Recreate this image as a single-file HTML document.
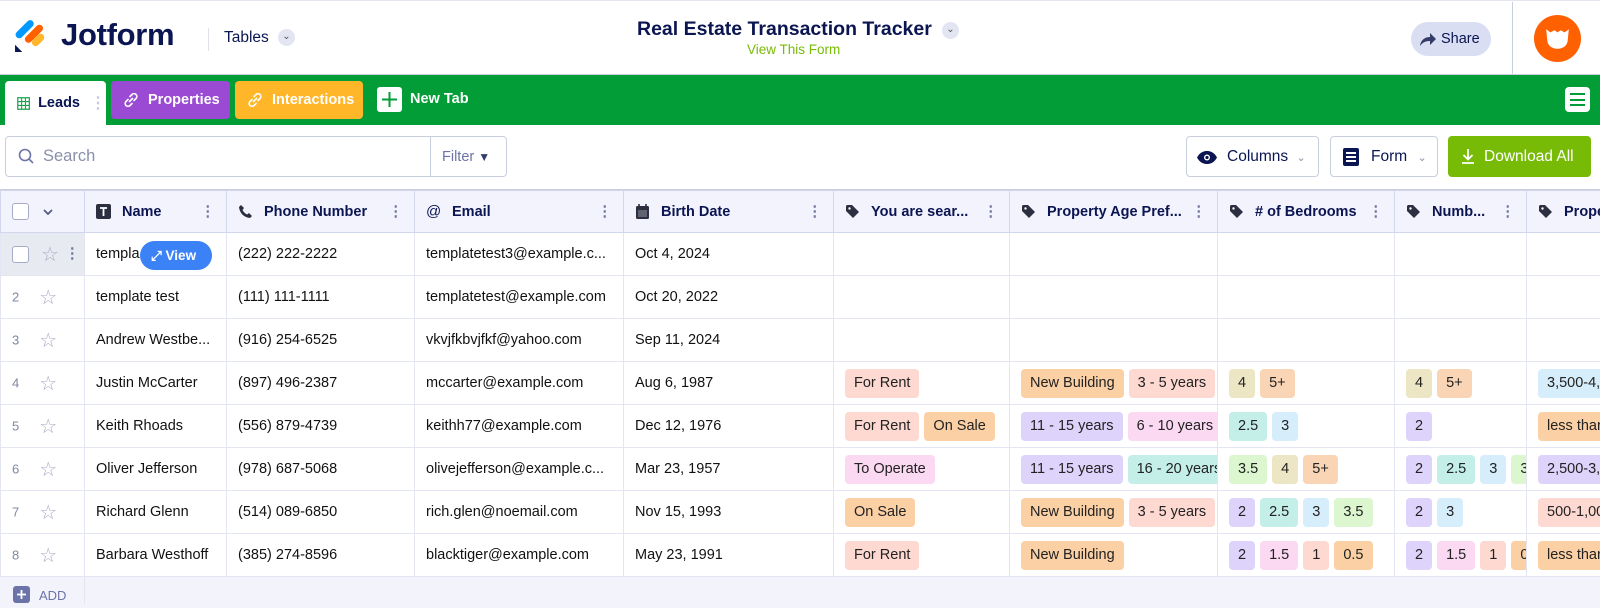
<!DOCTYPE html>
<html><head><meta charset="utf-8"><style>
*{box-sizing:border-box;margin:0;padding:0}
body{width:1600px;height:604px;overflow:hidden;background:#f3f3fb;font-family:"Liberation Sans",sans-serif;color:#0a1551;position:relative}
.hdr{position:absolute;left:0;top:0;width:1600px;height:75px;background:#fff;border-top:1px solid #e3e5ef;border-bottom:1px solid #c8cedc}
.green{position:absolute;left:0;top:75px;width:1600px;height:50px;background:#029d36}
.tool{position:absolute;left:0;top:125px;width:1600px;height:65px;background:#fff;border-bottom:1px solid #c8cedc}
.tab{position:absolute;top:6px;height:38px;border-radius:4px;color:#fff;font-weight:bold;font-size:14.5px;display:flex;align-items:center}
table{position:absolute;left:0;top:190px;border-collapse:collapse;table-layout:fixed;width:1730px;font-size:14.5px}
td,th{border:1px solid #e3e5f3;height:43px;padding:0 11px;white-space:nowrap;overflow:hidden;text-align:left;color:#111;vertical-align:middle}
th{height:42px;background:#f3f3fd;font-weight:bold;color:#0a1551;font-size:14.5px;border-color:#d3d7ee}
tbody tr{background:#fff}
.n{color:#8087a2;font-size:13px}
.tg{display:inline-block;height:29px;line-height:29px;padding:0 9px;border-radius:4px;margin-right:5px;color:#222;vertical-align:middle}
.sal{background:#fdd9d1}.or{background:#fcd0a5}.pu{background:#ded3fb}.pk{background:#fbd9f2}.te{background:#c3efe8}.kh{background:#ede6c4}.bl{background:#d6edfb}.gr{background:#dcf6cf}.o2{background:#f9d5b5}
.dots{float:right;color:#6e76a0;font-weight:bold}
.star{display:inline-block;color:#a8adc5;font-size:20px;margin-left:20px;vertical-align:middle}
.ic{display:inline-block;width:15px;height:15px;margin-right:11px;vertical-align:middle}
.tag{display:inline-block;width:15px;height:15px;margin-right:11px;vertical-align:middle}
</style></head><body>
<div class="hdr">
 <svg style="position:absolute;left:14px;top:19px" width="33" height="33" viewBox="0 0 32 32"><rect x="6" y="-2" width="7" height="22" rx="3.5" fill="#0099ff" transform="rotate(45 10 10)"/><rect x="16" y="2" width="7" height="22" rx="3.5" fill="#ff6100" transform="rotate(45 19 13)"/><rect x="20" y="12" width="7" height="14" rx="3.5" fill="#ffb629" transform="rotate(45 23 19)"/><path d="M1 24 L1 31 L8 31Z" fill="#0a1551"/></svg>
 <div style="position:absolute;left:61px;top:16px;font-size:31px;font-weight:bold;color:#0a1551;letter-spacing:-0.3px">Jotform</div>
 <div style="position:absolute;left:208px;top:27px;width:1px;height:23px;background:#dfe1ea"></div>
 <div style="position:absolute;left:224px;top:28px;font-size:15.5px;color:#0a1551">Tables</div>
 <div style="position:absolute;left:278px;top:28px;width:17px;height:17px;border-radius:50%;background:#e3e5f3;font-size:10px;text-align:center;line-height:15px;color:#555">⌄</div>
 <div style="position:absolute;left:637px;top:17px;font-size:19.5px;font-weight:bold;color:#0a1551">Real Estate Transaction Tracker</div>
 <div style="position:absolute;left:942px;top:21px;width:17px;height:17px;border-radius:50%;background:#e3e5f3;font-size:10px;text-align:center;line-height:15px;color:#555">⌄</div>
 <div style="position:absolute;left:747px;top:41px;font-size:13.5px;color:#78bb07">View This Form</div>
 <div style="position:absolute;left:1411px;top:21px;width:80px;height:34px;border-radius:17px;background:#dadef3;font-size:14.5px;line-height:34px;padding-left:30px;color:#0a1551">Share</div>
 <svg style="position:absolute;left:1420px;top:32px" width="16" height="13" viewBox="0 0 16 13"><path d="M0 13 C1 6 6 4 10 4 V0 L16 6 L10 12 V8 C6 8 3 9 0 13Z" fill="#343c6a"/></svg>
 <div style="position:absolute;left:1512px;top:1px;width:1px;height:73px;background:#c8cedc"></div>
 <div style="position:absolute;left:1534px;top:14px;width:47px;height:47px;border-radius:50%;background:#ff6100"></div>
 <svg style="position:absolute;left:1540px;top:20px" width="35" height="35" viewBox="0 0 34 34"><path d="M6 8 L10 11 L14 9 L17 11 L20 9 L24 11 L28 8 L27 18 C27 24 22 27 17 27 C12 27 7 24 7 18Z" fill="#fff"/></svg>
</div>
<div class="green">
 <div class="tab" style="left:5px;width:101px;height:44px;top:6px;background:#fff;color:#0a1551;border-radius:4px 4px 0 0;padding-left:12px">
  <svg width="17" height="17" viewBox="0 0 17 17" style="margin-right:8px"><rect x="1" y="1" width="15" height="15" fill="none" stroke="#18a64a" stroke-width="1.6"/><path d="M1 6H16M1 11H16M6 1V16M11 1V16" stroke="#18a64a" stroke-width="1.4"/></svg>Leads<span style="color:#c5c9e5;margin-left:10px;font-size:16px">⋮</span></div>
 <div class="tab" style="left:111px;width:119px;background:#9b4ad3;padding-left:12px"><svg width="16" height="16" viewBox="0 0 16 16" style="margin-right:9px"><path d="M6.5 9.5L9.5 6.5M7 4.5L9 2.5a2.8 2.8 0 014 4L11 8.5M9 11.5L7 13.5a2.8 2.8 0 01-4-4L5 7.5" fill="none" stroke="#fff" stroke-width="1.6" stroke-linecap="round"/></svg>Properties</div>
 <div class="tab" style="left:235px;width:128px;background:#ffb629;padding-left:12px"><svg width="16" height="16" viewBox="0 0 16 16" style="margin-right:9px"><path d="M6.5 9.5L9.5 6.5M7 4.5L9 2.5a2.8 2.8 0 014 4L11 8.5M9 11.5L7 13.5a2.8 2.8 0 01-4-4L5 7.5" fill="none" stroke="#fff" stroke-width="1.6" stroke-linecap="round"/></svg>Interactions</div>
 <div style="position:absolute;left:377px;top:12px;width:25px;height:25px;background:#fff;border-radius:3px"><svg width="25" height="25" viewBox="0 0 25 25"><path d="M12.5 5V20M5 12.5H20" stroke="#029d36" stroke-width="2"/></svg></div>
 <div style="position:absolute;left:410px;top:16px;color:#fff;font-weight:bold;font-size:14.5px">New Tab</div>
 <div style="position:absolute;left:1565px;top:12px;width:25px;height:25px;background:#fff;border-radius:4px;padding:6px 5px"><div style="height:2px;background:#029d36;margin-bottom:3.5px"></div><div style="height:2px;background:#029d36;margin-bottom:3.5px"></div><div style="height:2px;background:#029d36"></div></div>
</div>
<div class="tool">
 <div style="position:absolute;left:5px;top:11px;width:502px;height:41px;border:1px solid #c8cedc;border-radius:4px"></div>
 <svg style="position:absolute;left:18px;top:23px" width="16" height="16" viewBox="0 0 16 16"><circle cx="7" cy="7" r="5.5" fill="none" stroke="#6c73a8" stroke-width="1.6"/><path d="M11 11L15 15" stroke="#6c73a8" stroke-width="1.6"/></svg>
 <div style="position:absolute;left:43px;top:22px;font-size:16.5px;color:#8b90ab">Search</div>
 <div style="position:absolute;left:430px;top:12px;width:1px;height:39px;background:#c8cedc"></div>
 <div style="position:absolute;left:442px;top:24px;font-size:14.5px;color:#6c73a8">Filter <span style="color:#343c6a;font-size:12px">▼</span></div>
 <div style="position:absolute;left:1186px;top:11px;width:133px;height:41px;border:1px solid #c8cedc;border-radius:4px;font-size:15.5px;line-height:39px;padding-left:40px;color:#0a1551">Columns <span style="color:#8b90ab;font-size:11px;margin-left:4px">⌄</span></div>
 <svg style="position:absolute;left:1197px;top:26px" width="20" height="13" viewBox="0 0 20 13"><path d="M0 6.5C3 1 7 0 10 0S17 1 20 6.5C17 12 13 13 10 13S3 12 0 6.5Z" fill="#0a1551"/><circle cx="10" cy="6.5" r="3" fill="#fff"/><circle cx="10" cy="6.5" r="1.6" fill="#0a1551"/></svg>
 <div style="position:absolute;left:1330px;top:11px;width:108px;height:41px;border:1px solid #c8cedc;border-radius:4px;font-size:15.5px;line-height:39px;padding-left:40px;color:#0a1551">Form <span style="color:#8b90ab;font-size:11px;margin-left:6px">⌄</span></div>
 <div style="position:absolute;left:1343px;top:23px;width:16px;height:18px;background:#0a1551;border-radius:2px;padding:4px 3px"><div style="height:2px;background:#fff;margin-bottom:2px"></div><div style="height:2px;background:#fff;margin-bottom:2px"></div><div style="height:2px;background:#fff"></div></div>
 <div style="position:absolute;left:1448px;top:11px;width:143px;height:41px;background:#78bb07;border-radius:4px;color:#fff;font-size:15.5px;line-height:41px;padding-left:36px">Download All</div>
 <svg style="position:absolute;left:1461px;top:24px" width="14" height="15" viewBox="0 0 14 15"><path d="M7 0V10M2.5 6L7 10.5L11.5 6M1 14H13" stroke="#fff" stroke-width="1.8" fill="none"/></svg>
</div>
<table>
<colgroup><col style="width:84px"><col style="width:142px"><col style="width:188px"><col style="width:209px"><col style="width:210px"><col style="width:176px"><col style="width:208px"><col style="width:177px"><col style="width:132px"><col style="width:204px"></colgroup>
<thead><tr>
<th><span style="display:inline-block;width:17px;height:17px;border:1.5px solid #a6abc8;border-radius:3px;background:#fff;vertical-align:middle"></span><svg style="margin-left:14px;vertical-align:middle" width="10" height="6" viewBox="0 0 10 6"><path d="M1 1L5 5L9 1" stroke="#555b85" stroke-width="1.8" fill="none"/></svg></th>
<th><svg class="ic" viewBox="0 0 15 15"><rect width="15" height="15" rx="2" fill="#2b2f3f"/><path d="M4 4H11M7.5 4V12" stroke="#fff" stroke-width="1.8"/></svg>Name<span class="dots">⋮</span></th>
<th><svg class="ic" viewBox="0 0 15 15"><path d="M3 1L6 4L4.5 6C5.5 8 7 9.5 9 10.5L11 9L14 12L12 14C6 13.5 1.5 9 1 3Z" fill="#2b2f3f"/></svg>Phone Number<span class="dots">⋮</span></th>
<th><span class="ic" style="font-weight:normal;font-size:15px;line-height:15px">@</span>Email<span class="dots">⋮</span></th>
<th><svg class="ic" viewBox="0 0 15 15"><rect x="1" y="2" width="13" height="13" rx="1.5" fill="#2b2f3f"/><path d="M4 0V3M11 0V3" stroke="#2b2f3f" stroke-width="1.6"/><rect x="3" y="6" width="9" height="7" fill="#fff" opacity=".25"/></svg>Birth Date<span class="dots">⋮</span></th>
<th><svg class="tag" viewBox="0 0 15 15"><path d="M1 2V7L8 14L14 8L7 1H2Z" fill="#2b2f3f"/><circle cx="4.5" cy="4.5" r="1.2" fill="#fff"/></svg>You are sear...<span class="dots">⋮</span></th>
<th><svg class="tag" viewBox="0 0 15 15"><path d="M1 2V7L8 14L14 8L7 1H2Z" fill="#2b2f3f"/><circle cx="4.5" cy="4.5" r="1.2" fill="#fff"/></svg>Property Age Pref...<span class="dots">⋮</span></th>
<th><svg class="tag" viewBox="0 0 15 15"><path d="M1 2V7L8 14L14 8L7 1H2Z" fill="#2b2f3f"/><circle cx="4.5" cy="4.5" r="1.2" fill="#fff"/></svg># of Bedrooms<span class="dots">⋮</span></th>
<th><svg class="tag" viewBox="0 0 15 15"><path d="M1 2V7L8 14L14 8L7 1H2Z" fill="#2b2f3f"/><circle cx="4.5" cy="4.5" r="1.2" fill="#fff"/></svg>Numb...<span class="dots">⋮</span></th>
<th><svg class="tag" viewBox="0 0 15 15"><path d="M1 2V7L8 14L14 8L7 1H2Z" fill="#2b2f3f"/><circle cx="4.5" cy="4.5" r="1.2" fill="#fff"/></svg>Prope</th>
</tr></thead>
<tbody>
<tr><td style="background:#e8eaf1"><span style="display:inline-block;width:17px;height:17px;border:1.5px solid #a6abc8;border-radius:3px;background:#fff;vertical-align:middle"></span><span class="star" style="margin-left:12px">☆</span><span style="color:#6e76a0;font-weight:bold;margin-left:6px">⋮</span></td><td style="position:relative">templa<span style="position:absolute;left:55px;top:8px;width:72px;height:29px;background:#3b82f6;border-radius:15px;color:#fff;font-weight:bold;line-height:29px;padding-left:11px;font-size:13.5px">⤢ View</span></td><td>(222) 222-2222</td><td>templatetest3@example.c...</td><td>Oct 4, 2024</td><td></td><td></td><td></td><td></td><td></td></tr>
<tr><td><span class="n">2</span><span class="star">☆</span></td><td>template test</td><td>(111) 111-1111</td><td>templatetest@example.com</td><td>Oct 20, 2022</td><td></td><td></td><td></td><td></td><td></td></tr>
<tr><td><span class="n">3</span><span class="star">☆</span></td><td>Andrew Westbe...</td><td>(916) 254-6525</td><td>vkvjfkbvjfkf@yahoo.com</td><td>Sep 11, 2024</td><td></td><td></td><td></td><td></td><td></td></tr>
<tr><td><span class="n">4</span><span class="star">☆</span></td><td>Justin McCarter</td><td>(897) 496-2387</td><td>mccarter@example.com</td><td>Aug 6, 1987</td><td><span class="tg sal">For Rent</span></td><td><span class="tg or">New Building</span><span class="tg sal">3 - 5 years</span></td><td><span class="tg kh">4</span><span class="tg o2">5+</span></td><td><span class="tg kh">4</span><span class="tg o2">5+</span></td><td><span class="tg bl">3,500-4,000</span></td></tr>
<tr><td><span class="n">5</span><span class="star">☆</span></td><td>Keith Rhoads</td><td>(556) 879-4739</td><td>keithh77@example.com</td><td>Dec 12, 1976</td><td><span class="tg sal">For Rent</span><span class="tg or">On Sale</span></td><td><span class="tg pu">11 - 15 years</span><span class="tg pk">6 - 10 years</span></td><td><span class="tg te">2.5</span><span class="tg bl">3</span></td><td><span class="tg pu">2</span></td><td><span class="tg or">less than 500</span></td></tr>
<tr><td><span class="n">6</span><span class="star">☆</span></td><td>Oliver Jefferson</td><td>(978) 687-5068</td><td>olivejefferson@example.c...</td><td>Mar 23, 1957</td><td><span class="tg pk">To Operate</span></td><td><span class="tg pu">11 - 15 years</span><span class="tg te">16 - 20 years</span></td><td><span class="tg gr">3.5</span><span class="tg kh">4</span><span class="tg o2">5+</span></td><td><span class="tg pu">2</span><span class="tg te">2.5</span><span class="tg bl">3</span><span class="tg gr">3</span></td><td><span class="tg pu">2,500-3,000</span></td></tr>
<tr><td><span class="n">7</span><span class="star">☆</span></td><td>Richard Glenn</td><td>(514) 089-6850</td><td>rich.glen@noemail.com</td><td>Nov 15, 1993</td><td><span class="tg or">On Sale</span></td><td><span class="tg or">New Building</span><span class="tg sal">3 - 5 years</span></td><td><span class="tg pu">2</span><span class="tg te">2.5</span><span class="tg bl">3</span><span class="tg gr">3.5</span></td><td><span class="tg pu">2</span><span class="tg bl">3</span></td><td><span class="tg sal">500-1,000</span></td></tr>
<tr><td><span class="n">8</span><span class="star">☆</span></td><td>Barbara Westhoff</td><td>(385) 274-8596</td><td>blacktiger@example.com</td><td>May 23, 1991</td><td><span class="tg sal">For Rent</span></td><td><span class="tg or">New Building</span></td><td><span class="tg pu">2</span><span class="tg pk">1.5</span><span class="tg sal">1</span><span class="tg or">0.5</span></td><td><span class="tg pu">2</span><span class="tg pk">1.5</span><span class="tg sal">1</span><span class="tg or">0.5</span></td><td><span class="tg or">less than 500</span></td></tr>
</tbody></table>
<div style="position:absolute;left:84px;top:575px;width:1px;height:29px;background:#e3e5f3"></div>
<div style="position:absolute;left:13px;top:586px;width:17px;height:17px;background:#6c73a8;border-radius:3px"><svg width="17" height="17" viewBox="0 0 17 17"><path d="M8.5 4V13M4 8.5H13" stroke="#fff" stroke-width="1.8"/></svg></div>
<div style="position:absolute;left:39px;top:588px;font-size:13px;color:#6c73a8">ADD</div>
</body></html>
